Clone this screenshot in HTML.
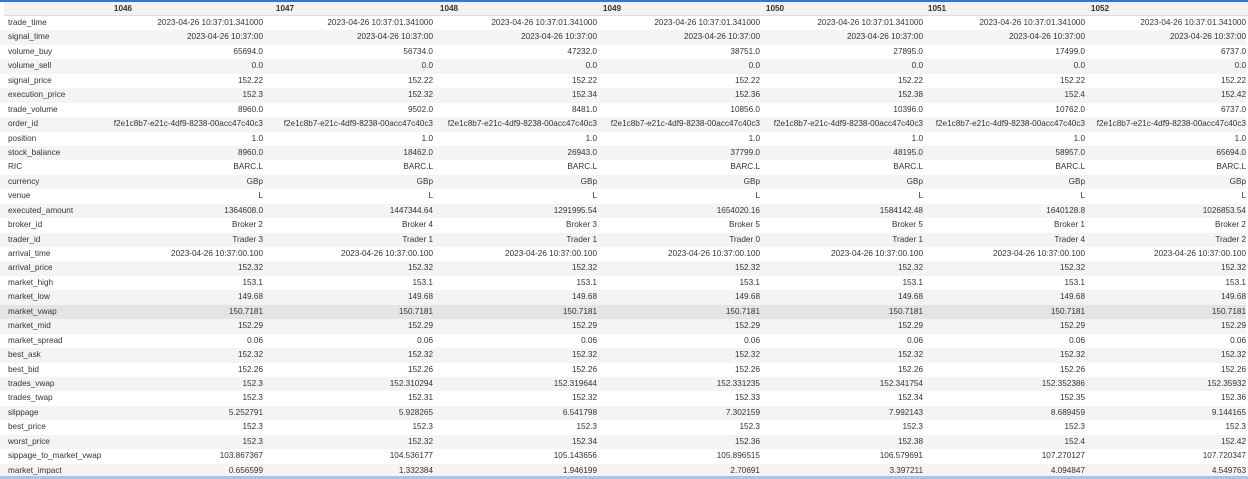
<!DOCTYPE html><html><head><style>
body{margin:0;width:1248px;height:479px;overflow:hidden;background:#fff;font-family:"Liberation Sans",sans-serif;font-size:8.2px;color:#333}
.top{position:absolute;left:0;top:0;width:1248px;height:2px;background:#3a72d4}
.bot{position:absolute;left:0;top:476px;width:1248px;height:3px;background:#a9c4ea}
.hdr{position:absolute;left:4px;top:2px;width:1244px;height:13px;background:#f2f2f2;border-bottom:1px solid #ddd}
.hdr span{position:absolute;top:2px;width:60px;margin-left:-30px;text-align:center;font-weight:bold;color:#333}
table,tbody{display:block}
table{position:absolute;left:0;top:16px;width:1246px}
tr{display:flex;height:14.45px;min-height:14.45px}
td{display:block;padding:0;line-height:14.45px;height:14.45px;text-align:right;white-space:nowrap;overflow:hidden}
td:nth-child(1){width:92px;text-align:left;padding-left:8px;overflow:visible}
td:nth-child(2){width:163px}
td:nth-child(3){width:170px}
td:nth-child(4){width:164px}
td:nth-child(5){width:163px}
td:nth-child(6){width:163px}
td:nth-child(7){width:162px}
td:nth-child(8){width:161px}
tr:nth-child(even){background:#f4f4f4}
tr.hl{background:#e4e4e4!important}
</style></head><body>
<div class="top"></div>
<div class="hdr"><span style="left:119px">1046</span><span style="left:281px">1047</span><span style="left:445px">1048</span><span style="left:608px">1049</span><span style="left:771px">1050</span><span style="left:933px">1051</span><span style="left:1096px">1052</span></div>
<table>
<tr><td>trade_time</td><td>2023-04-26 10:37:01.341000</td><td>2023-04-26 10:37:01.341000</td><td>2023-04-26 10:37:01.341000</td><td>2023-04-26 10:37:01.341000</td><td>2023-04-26 10:37:01.341000</td><td>2023-04-26 10:37:01.341000</td><td>2023-04-26 10:37:01.341000</td></tr>
<tr><td>signal_time</td><td>2023-04-26 10:37:00</td><td>2023-04-26 10:37:00</td><td>2023-04-26 10:37:00</td><td>2023-04-26 10:37:00</td><td>2023-04-26 10:37:00</td><td>2023-04-26 10:37:00</td><td>2023-04-26 10:37:00</td></tr>
<tr><td>volume_buy</td><td>65694.0</td><td>56734.0</td><td>47232.0</td><td>38751.0</td><td>27895.0</td><td>17499.0</td><td>6737.0</td></tr>
<tr><td>volume_sell</td><td>0.0</td><td>0.0</td><td>0.0</td><td>0.0</td><td>0.0</td><td>0.0</td><td>0.0</td></tr>
<tr><td>signal_price</td><td>152.22</td><td>152.22</td><td>152.22</td><td>152.22</td><td>152.22</td><td>152.22</td><td>152.22</td></tr>
<tr><td>execution_price</td><td>152.3</td><td>152.32</td><td>152.34</td><td>152.36</td><td>152.38</td><td>152.4</td><td>152.42</td></tr>
<tr><td>trade_volume</td><td>8960.0</td><td>9502.0</td><td>8481.0</td><td>10856.0</td><td>10396.0</td><td>10762.0</td><td>6737.0</td></tr>
<tr><td>order_id</td><td>f2e1c8b7-e21c-4df9-8238-00acc47c40c3</td><td>f2e1c8b7-e21c-4df9-8238-00acc47c40c3</td><td>f2e1c8b7-e21c-4df9-8238-00acc47c40c3</td><td>f2e1c8b7-e21c-4df9-8238-00acc47c40c3</td><td>f2e1c8b7-e21c-4df9-8238-00acc47c40c3</td><td>f2e1c8b7-e21c-4df9-8238-00acc47c40c3</td><td>f2e1c8b7-e21c-4df9-8238-00acc47c40c3</td></tr>
<tr><td>position</td><td>1.0</td><td>1.0</td><td>1.0</td><td>1.0</td><td>1.0</td><td>1.0</td><td>1.0</td></tr>
<tr><td>stock_balance</td><td>8960.0</td><td>18462.0</td><td>26943.0</td><td>37799.0</td><td>48195.0</td><td>58957.0</td><td>65694.0</td></tr>
<tr><td>RIC</td><td>BARC.L</td><td>BARC.L</td><td>BARC.L</td><td>BARC.L</td><td>BARC.L</td><td>BARC.L</td><td>BARC.L</td></tr>
<tr><td>currency</td><td>GBp</td><td>GBp</td><td>GBp</td><td>GBp</td><td>GBp</td><td>GBp</td><td>GBp</td></tr>
<tr><td>venue</td><td>L</td><td>L</td><td>L</td><td>L</td><td>L</td><td>L</td><td>L</td></tr>
<tr><td>executed_amount</td><td>1364608.0</td><td>1447344.64</td><td>1291995.54</td><td>1654020.16</td><td>1584142.48</td><td>1640128.8</td><td>1026853.54</td></tr>
<tr><td>broker_id</td><td>Broker 2</td><td>Broker 4</td><td>Broker 3</td><td>Broker 5</td><td>Broker 5</td><td>Broker 1</td><td>Broker 2</td></tr>
<tr><td>trader_id</td><td>Trader 3</td><td>Trader 1</td><td>Trader 1</td><td>Trader 0</td><td>Trader 1</td><td>Trader 4</td><td>Trader 2</td></tr>
<tr><td>arrival_time</td><td>2023-04-26 10:37:00.100</td><td>2023-04-26 10:37:00.100</td><td>2023-04-26 10:37:00.100</td><td>2023-04-26 10:37:00.100</td><td>2023-04-26 10:37:00.100</td><td>2023-04-26 10:37:00.100</td><td>2023-04-26 10:37:00.100</td></tr>
<tr><td>arrival_price</td><td>152.32</td><td>152.32</td><td>152.32</td><td>152.32</td><td>152.32</td><td>152.32</td><td>152.32</td></tr>
<tr><td>market_high</td><td>153.1</td><td>153.1</td><td>153.1</td><td>153.1</td><td>153.1</td><td>153.1</td><td>153.1</td></tr>
<tr><td>market_low</td><td>149.68</td><td>149.68</td><td>149.68</td><td>149.68</td><td>149.68</td><td>149.68</td><td>149.68</td></tr>
<tr class="hl"><td>market_vwap</td><td>150.7181</td><td>150.7181</td><td>150.7181</td><td>150.7181</td><td>150.7181</td><td>150.7181</td><td>150.7181</td></tr>
<tr><td>market_mid</td><td>152.29</td><td>152.29</td><td>152.29</td><td>152.29</td><td>152.29</td><td>152.29</td><td>152.29</td></tr>
<tr><td>market_spread</td><td>0.06</td><td>0.06</td><td>0.06</td><td>0.06</td><td>0.06</td><td>0.06</td><td>0.06</td></tr>
<tr><td>best_ask</td><td>152.32</td><td>152.32</td><td>152.32</td><td>152.32</td><td>152.32</td><td>152.32</td><td>152.32</td></tr>
<tr><td>best_bid</td><td>152.26</td><td>152.26</td><td>152.26</td><td>152.26</td><td>152.26</td><td>152.26</td><td>152.26</td></tr>
<tr><td>trades_vwap</td><td>152.3</td><td>152.310294</td><td>152.319644</td><td>152.331235</td><td>152.341754</td><td>152.352386</td><td>152.35932</td></tr>
<tr><td>trades_twap</td><td>152.3</td><td>152.31</td><td>152.32</td><td>152.33</td><td>152.34</td><td>152.35</td><td>152.36</td></tr>
<tr><td>slippage</td><td>5.252791</td><td>5.928265</td><td>6.541798</td><td>7.302159</td><td>7.992143</td><td>8.689459</td><td>9.144165</td></tr>
<tr><td>best_price</td><td>152.3</td><td>152.3</td><td>152.3</td><td>152.3</td><td>152.3</td><td>152.3</td><td>152.3</td></tr>
<tr><td>worst_price</td><td>152.3</td><td>152.32</td><td>152.34</td><td>152.36</td><td>152.38</td><td>152.4</td><td>152.42</td></tr>
<tr><td>sippage_to_market_vwap</td><td>103.867367</td><td>104.536177</td><td>105.143656</td><td>105.896515</td><td>106.579691</td><td>107.270127</td><td>107.720347</td></tr>
<tr><td>market_impact</td><td>0.656599</td><td>1.332384</td><td>1.946199</td><td>2.70691</td><td>3.397211</td><td>4.094847</td><td>4.549763</td></tr>
</table>
<div class="bot"></div>
</body></html>
